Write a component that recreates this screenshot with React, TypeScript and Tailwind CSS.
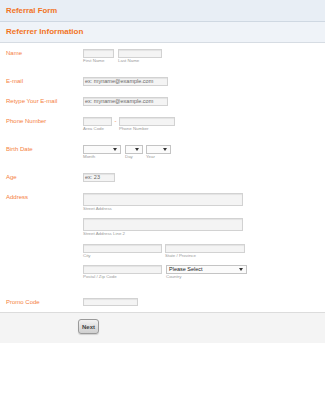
import React from 'react';

const font = { fontFamily: '"Liberation Sans", Arial, sans-serif' };

const Box = ({ w, h = 9, placeholder }: { w: number; h?: number; placeholder?: string }) => (
  <div
    className="border border-[#d2d2d2] bg-[#f4f4f4] shadow-[inset_0_1px_1px_rgba(0,0,0,0.07)] text-[5.5px] leading-[7px] text-[#666] px-[1px] overflow-hidden whitespace-nowrap"
    style={{ width: w, height: h }}
  >
    {placeholder}
  </div>
);

const Select = ({ w, text }: { w: number; text?: string }) => (
  <div
    className="h-[9px] border border-[#c4c4c4] bg-[#fbfbfb] flex items-center justify-between pl-[2px] pr-[3px] text-[5.5px] leading-[7px] text-[#222]"
    style={{ width: w }}
  >
    <span>{text}</span>
    <svg width="4" height="3" viewBox="0 0 4 3">
      <path d="M0 0 H4 L2 3 Z" fill="#333" />
    </svg>
  </div>
);

const Sub = ({ children }: { children: React.ReactNode }) => (
  <div className="text-[4.4px] leading-[6px] text-[#9a9a9a] whitespace-nowrap">{children}</div>
);

const Field = ({ children }: { children: React.ReactNode }) => (
  <div className="flex flex-col">{children}</div>
);

const Row = ({ label, h, children }: { label: string; h: number; children: React.ReactNode }) => (
  <div className="flex" style={{ height: h }}>
    <div className="w-[83px] pl-[6px] text-[6px] leading-[9px] text-[#f5803e] whitespace-nowrap">{label}</div>
    <div className="flex-1">{children}</div>
  </div>
);

export default function App() {
  return (
    <div className="w-[325px] h-[400px] bg-white" style={font}>
      <div className="h-[22px] bg-[#e8eef5] border-b border-[#cfd8e2] flex items-center pl-[6px]">
        <span className="text-[7.8px] font-bold text-[#f2731f]">Referral Form</span>
      </div>
      <div className="h-[21px] bg-[#eff3f8] border-b border-[#d6dce3] flex items-center pl-[6px]">
        <span className="text-[8px] font-bold text-[#f2731f]">Referrer Information</span>
      </div>

      <div className="pt-[6px]">
        <Row label="Name" h={28}>
          <div className="flex gap-[4px]">
            <Field>
              <Box w={31} />
              <Sub>First Name</Sub>
            </Field>
            <Field>
              <Box w={44} />
              <Sub>Last Name</Sub>
            </Field>
          </div>
        </Row>
        <Row label="E-mail" h={20}>
          <Box w={85} placeholder="ex: myname@example.com" />
        </Row>
        <Row label="Retype Your E-mail" h={20}>
          <Box w={85} placeholder="ex: myname@example.com" />
        </Row>
        <Row label="Phone Number" h={28}>
          <div className="flex">
            <Field>
              <Box w={29} />
              <Sub>Area Code</Sub>
            </Field>
            <div className="w-[7px] text-center text-[6px] leading-[9px] text-[#f5803e]">-</div>
            <Field>
              <Box w={56} />
              <Sub>Phone Number</Sub>
            </Field>
          </div>
        </Row>
        <Row label="Birth Date" h={28}>
          <div className="flex">
            <Field>
              <Select w={38} />
              <Sub>Month</Sub>
            </Field>
            <div className="ml-[4px]">
              <Field>
                <Select w={18} />
                <Sub>Day</Sub>
              </Field>
            </div>
            <div className="ml-[3px]">
              <Field>
                <Select w={25} />
                <Sub>Year</Sub>
              </Field>
            </div>
          </div>
        </Row>
        <Row label="Age" h={20}>
          <Box w={32} placeholder="ex: 23" />
        </Row>
        <Row label="Address" h={105}>
          <div className="h-[25px]">
            <Field>
              <Box w={160} h={13} />
              <Sub>Street Address</Sub>
            </Field>
          </div>
          <div className="h-[26px]">
            <Field>
              <Box w={160} h={13} />
              <Sub>Street Address Line 2</Sub>
            </Field>
          </div>
          <div className="h-[21px] flex gap-[3px]">
            <Field>
              <Box w={79} />
              <Sub>City</Sub>
            </Field>
            <Field>
              <Box w={80} />
              <Sub>State / Province</Sub>
            </Field>
          </div>
          <div className="flex gap-[4px]">
            <Field>
              <Box w={79} />
              <Sub>Postal / Zip Code</Sub>
            </Field>
            <Field>
              <Select w={81} text="Please Select" />
              <Sub>Country</Sub>
            </Field>
          </div>
        </Row>
        <Row label="Promo Code" h={14}>
          <Box w={55} h={8} />
        </Row>
      </div>

      <div className="h-[31px] bg-[#f4f4f4] border-t border-[#dcdcdc] pl-[78px] pt-[6px] flex items-start">
        <button className="w-[21px] h-[15px] rounded-[3px] border border-[#9a9a9a] bg-gradient-to-b from-[#f2f2f2] to-[#cfcfcf] text-[6px] font-bold text-[#444] leading-none shadow-[0_1px_1px_rgba(0,0,0,0.15)]">
          Next
        </button>
      </div>
    </div>
  );
}
